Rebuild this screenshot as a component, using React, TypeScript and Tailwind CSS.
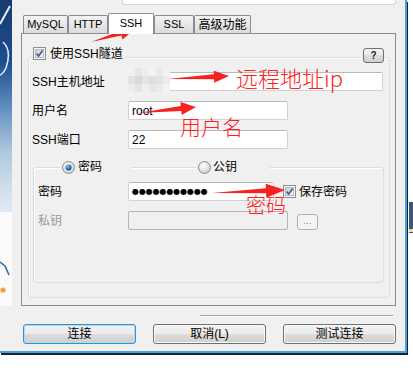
import React from "react";

// red annotation arrow: tapered tail -> head
function arrowPoints(tx: number, ty: number, px: number, py: number, head: number, half: number, shaft: number) {
  const len = Math.hypot(px - tx, py - ty);
  const ux = (px - tx) / len;
  const uy = (py - ty) / len;
  const nx = -uy;
  const ny = ux;
  const bx = px - ux * head;
  const by = py - uy * head;
  const pts = [
    [tx, ty],
    [bx + nx * shaft, by + ny * shaft],
    [bx + nx * half, by + ny * half],
    [px, py],
    [bx - nx * half, by - ny * half],
    [bx - nx * shaft, by - ny * shaft],
  ];
  return pts.map((p) => p.map((v) => v.toFixed(1)).join(",")).join(" ");
}

const arrows = [
  arrowPoints(91, 42, 135, 29, 15, 6.5, 2.5),
  arrowPoints(168, 79, 229, 76, 15, 6, 2.5),
  arrowPoints(138, 113, 196, 107, 15, 6.5, 2.5),
  arrowPoints(212, 193, 285, 190, 19, 7, 2.5),
];

const mosaic = [
  "bg-[#f1f1f1]", "bg-[#e6e6e6]", "bg-[#eeeeee]", "bg-[#f3f3f3]", "bg-[#e9e9e9]", "bg-[#f2f2f2]",
  "bg-[#e2e2e2]", "bg-[#d8d8d8]", "bg-[#e5e5e5]", "bg-[#dedede]", "bg-[#e3e3e3]", "bg-[#ececec]",
  "bg-[#ececec]", "bg-[#e4e4e4]", "bg-[#efefef]", "bg-[#e6e6e6]", "bg-[#eaeaea]", "bg-[#f4f4f4]",
];

function Checkbox() {
  return (
    <svg width="13" height="13" viewBox="0 0 13 13" className="shrink-0">
      <defs>
        <linearGradient id="cbfill" x1="0" y1="0" x2="1" y2="1">
          <stop offset="0" stopColor="#c9ced6" />
          <stop offset="1" stopColor="#f4f5f7" />
        </linearGradient>
      </defs>
      <rect x="0.5" y="0.5" width="12" height="12" fill="#f6f6f6" stroke="#8e8f8f" />
      <rect x="2.5" y="2.5" width="8" height="8" fill="url(#cbfill)" stroke="#b4b9c0" />
      <path d="M3.6 6.4 L5.6 9 L9.6 3.4" fill="none" stroke="#4a5f97" strokeWidth="1.7" />
    </svg>
  );
}

function Radio({ checked }: { checked?: boolean }) {
  const id = checked ? "ron" : "roff";
  return (
    <svg width="13" height="13" viewBox="0 0 13 13" className="shrink-0">
      <defs>
        <radialGradient id={id + "bg"} cx="0.4" cy="0.35" r="0.7">
          <stop offset="0" stopColor="#ffffff" />
          <stop offset="1" stopColor="#c9cbcf" />
        </radialGradient>
        <radialGradient id={id + "dot"} cx="0.4" cy="0.35" r="0.7">
          <stop offset="0" stopColor="#8fd0f6" />
          <stop offset="0.6" stopColor="#1d6fb8" />
          <stop offset="1" stopColor="#0d3f75" />
        </radialGradient>
      </defs>
      <circle cx="6.5" cy="6.5" r="6" fill={`url(#${id}bg)`} stroke="#8b8d91" />
      {checked && <circle cx="6.5" cy="6.5" r="3" fill={`url(#${id}dot)`} />}
    </svg>
  );
}

function Field({ w, children, disabled }: { w: string; children?: React.ReactNode; disabled?: boolean }) {
  return (
    <div
      className={`${w} h-[19px] shrink-0 rounded-[2px] border flex items-center pl-[3px] ${
        disabled ? "bg-[#f0f0f0] border-[#b5b5b5]" : "bg-white border-[#d2d2d2] border-t-[#b9b9b9]"
      }`}
    >
      {children}
    </div>
  );
}

function WinButton({ label, primary }: { label: string; primary?: boolean }) {
  return (
    <div
      className={`w-[113px] h-[20px] rounded-[3px] border flex items-center justify-center text-[12px] bg-[linear-gradient(to_bottom,#f2f2f2_0%,#ebebeb_50%,#dddddd_50%,#cfcfcf_100%)] ${
        primary ? "border-[#3c8fc4] shadow-[inset_0_0_0_1px_#a6def7]" : "border-[#707070] shadow-[inset_0_0_0_1px_#fafafa]"
      }`}
    >
      {label}
    </div>
  );
}

function LeftStrip() {
  return (
    <svg width="12" height="306" viewBox="0 0 12 306" className="shrink-0 block">
      <defs>
        <linearGradient id="strip" x1="0" y1="0" x2="0" y2="1">
          <stop offset="0" stopColor="#163a72" />
          <stop offset="0.3" stopColor="#1f4f8e" />
          <stop offset="0.5" stopColor="#5f8cbd" />
          <stop offset="0.72" stopColor="#b2c9e0" />
          <stop offset="1" stopColor="#e2ebf4" />
        </linearGradient>
      </defs>
      <rect x="0" y="0" width="12" height="212" fill="url(#strip)" />
      <path d="M0 24 L10 6" stroke="#e8f0f8" strokeWidth="2" fill="none" />
      <path d="M3 42 Q12 50 6 68 Q3 74 0 75" stroke="#dfe9f4" strokeWidth="1.6" fill="none" />
      <rect x="0" y="212" width="12" height="94" fill="#fbfbfb" />
      <path d="M0 262 L5 266 L9 275" stroke="#2f6f9c" strokeWidth="1.6" fill="none" />
      <circle cx="3" cy="290" r="2.6" fill="#f0a33c" />
    </svg>
  );
}

export default function App() {
  return (
    <div className="relative w-[413px] h-[374px] bg-white overflow-hidden flex items-start font-['Liberation_Sans','Noto_Sans_CJK_SC',sans-serif] text-[12px] text-black">
      {/* dialog window */}
      <div className="w-[407px] h-[353px] shrink-0 bg-[#f0f0f0] border-r-2 border-b-2 border-[#45a3dc] shadow-[1px_2px_0_#1c2230] flex flex-col">
        <div className="flex">
          <LeftStrip />
          <div className="flex flex-col">
            {/* bottom of connection-name box */}
            <div className="ml-[110px] w-[274px] h-[5px] bg-white border border-t-0 border-[#d5d5d5] rounded-b-[3px]" />

            {/* tabs */}
            <div className="mt-[8px] ml-[11px] h-[20px] flex items-end text-[11px]">
              <div className="w-[45px] h-[18px] rounded-t-[2px] border border-b-0 border-[#898c95] bg-[linear-gradient(#f3f3f3,#dcdcdc)] flex items-center justify-center">MySQL</div>
              <div className="w-[40px] h-[18px] rounded-t-[2px] border border-b-0 border-[#898c95] bg-[linear-gradient(#f3f3f3,#dcdcdc)] flex items-center justify-center">HTTP</div>
              <div className="relative z-10 w-[46px] h-[21px] -mb-[1px] rounded-t-[2px] border border-b-0 border-[#898c95] bg-white flex items-center justify-center pb-[2px]">SSH</div>
              <div className="w-[40px] h-[18px] rounded-t-[2px] border border-b-0 border-[#898c95] bg-[linear-gradient(#f3f3f3,#dcdcdc)] flex items-center justify-center">SSL</div>
              <div className="w-[57px] h-[18px] rounded-t-[2px] border border-b-0 border-[#898c95] bg-[linear-gradient(#f3f3f3,#dcdcdc)] flex items-center justify-center text-[12px]">高级功能</div>
            </div>

            {/* tab page */}
            <div className="ml-[9px] w-[375px] h-[273px] border border-[#898c95] bg-[#f0f0f0] flex flex-col">
              <div className="mt-[23px] ml-[6px] w-[362px] h-[241px] rounded-[3px] border border-[#d5dfe5] shadow-[inset_1px_1px_0_#ffffff] flex flex-col">
                {/* group header */}
                <div className="-mt-[11px] h-[16px] flex items-start justify-between pl-[4px] pr-[5px]">
                  <div className="h-[13px] flex items-center gap-[4px] bg-[#f0f0f0] pr-[3px]">
                    <Checkbox />
                    <span>使用SSH隧道</span>
                  </div>
                  <div className="mt-[1px] w-[21px] h-[15px] rounded-[3px] border border-[#707070] bg-[linear-gradient(to_bottom,#f2f2f2_0%,#ebebeb_50%,#dddddd_50%,#cfcfcf_100%)] flex items-center justify-center text-[10px] font-bold text-[#1a1a3a]">
                    ?
                  </div>
                </div>

                <div className="mt-[9px] h-[19px] flex items-center pl-[3px]">
                  <span className="w-[96px] shrink-0">SSH主机地址</span>
                  <Field w="w-[255px]" />
                </div>
                <div className="mt-[10px] h-[19px] flex items-center pl-[3px]">
                  <span className="w-[96px] shrink-0">用户名</span>
                  <Field w="w-[160px]">root</Field>
                </div>
                <div className="mt-[10px] h-[19px] flex items-center pl-[3px]">
                  <span className="w-[96px] shrink-0">SSH端口</span>
                  <Field w="w-[160px]">22</Field>
                </div>

                {/* auth group */}
                <div className="mt-[18px] ml-[4px] w-[351px] h-[116px] rounded-[3px] border border-[#d5dfe5] shadow-[inset_1px_1px_0_#ffffff] flex flex-col">
                  <div className="-mt-[8px] h-[14px] flex items-center">
                    <div className="ml-[27px] w-[71px] h-[14px] bg-[#f0f0f0] flex items-center gap-[3px] pl-[1px]">
                      <Radio checked />
                      <span>密码</span>
                    </div>
                    <div className="ml-[65px] w-[73px] h-[14px] bg-[#f0f0f0] flex items-center gap-[2px] pl-[1px]">
                      <Radio />
                      <span>公钥</span>
                    </div>
                  </div>

                  <div className="mt-[8px] h-[19px] flex items-center pl-[4px]">
                    <span className="w-[90px] shrink-0">密码</span>
                    <Field w="w-[146px]">
                      <span className="font-['DejaVu_Sans'] text-[8px] tracking-[-0.1px] leading-none">●●●●●●●●●●●</span>
                    </Field>
                    <div className="ml-[9px]">
                      <Checkbox />
                    </div>
                    <span className="ml-[3px]">保存密码</span>
                  </div>

                  <div className="mt-[10px] h-[19px] flex items-start pl-[4px]">
                    <span className="w-[90px] shrink-0 h-[19px] flex items-center text-[#9a9a9a]">私钥</span>
                    <Field w="w-[160px]" disabled />
                    <div className="ml-[9px] mt-[3px] w-[21px] h-[16px] rounded-[3px] border border-[#adb2b5] bg-[#f4f4f4] flex items-center justify-center text-[10px] text-[#8a8a8a] pb-[3px]">
                      ...
                    </div>
                  </div>
                </div>
              </div>
            </div>
          </div>
        </div>

        {/* separator + buttons */}
        <div className="mt-[9px] ml-[200px] w-[193px] h-[1px] bg-[#a0a0a0] shadow-[0_1px_0_#ffffff]" />
        <div className="mt-[8px] pl-[23px] flex gap-[17px]">
          <WinButton label="连接" primary />
          <WinButton label="取消(L)" />
          <WinButton label="测试连接" />
        </div>
      </div>

      {/* desktop behind */}
      <div className="ml-[2px] mt-[202px] w-[4px] h-[31px] bg-[#3b5678] flex flex-col justify-end">
        <div className="h-[3px] bg-[#f3d9a2] mb-[1px]" />
      </div>

      {/* blurred address */}
      <div className="absolute left-[128px] top-[68px] w-[42px] h-[24px] grid grid-cols-6">
        {mosaic.map((c, i) => (
          <div key={i} className={c} />
        ))}
      </div>

      {/* annotations */}
      <svg className="absolute inset-0 pointer-events-none" width="413" height="374" viewBox="0 0 413 374">
        {arrows.map((p, i) => (
          <polygon key={i} points={p} fill="#f5231f" />
        ))}
      </svg>
      <span className="absolute left-[236px] top-[66px] text-[22px] leading-[22px] text-[#ff2020] font-['Noto_Sans_CJK_SC',sans-serif] font-light whitespace-nowrap">
        远程地址ip
      </span>
      <span className="absolute left-[180px] top-[116px] text-[21px] leading-[21px] text-[#ff2020] font-['Noto_Sans_CJK_SC',sans-serif] font-light whitespace-nowrap">
        用户名
      </span>
      <span className="absolute left-[246px] top-[195px] text-[20px] leading-[20px] text-[#ff2020] font-['Noto_Sans_CJK_SC',sans-serif] font-light whitespace-nowrap">
        密码
      </span>
    </div>
  );
}
